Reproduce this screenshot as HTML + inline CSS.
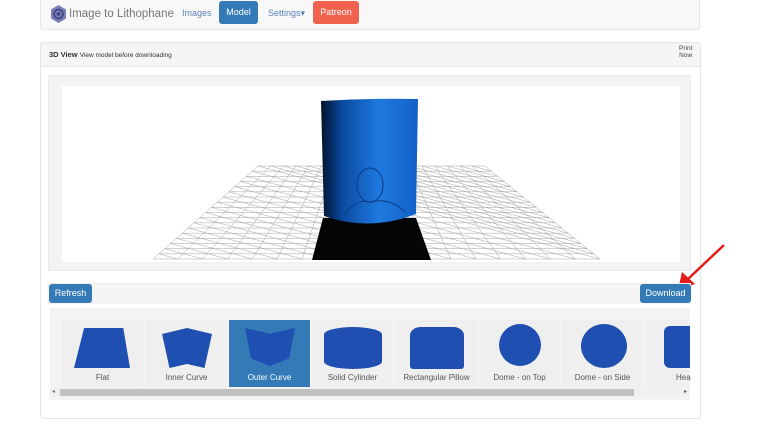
<!DOCTYPE html>
<html><head><meta charset="utf-8"><style>
*{box-sizing:border-box;margin:0;padding:0}
body{width:768px;height:430px;background:#fff;font-family:"Liberation Sans",sans-serif;position:relative;overflow:hidden}
.abs{position:absolute}
.nav{left:40px;top:-1px;width:660px;height:31px;background:#f8f8f8;border:1px solid #e7e7e7;border-radius:0 0 3px 3px}
.btn{position:absolute;color:#fff;font-size:9px;text-align:center;border-radius:3px}
.panel{left:40px;top:42px;width:661px;height:377px;border:1px solid #e6e6e6;border-radius:3px;background:#fff}
.head{left:40px;top:42px;width:661px;height:25px;background:#f5f5f5;border:1px solid #e6e6e6;border-radius:3px 3px 0 0}
.item{position:absolute;top:320px;width:81px;height:67px;background:#efefef;font-size:8px;color:#555;text-align:center}
.item span{position:absolute;left:0;right:0;top:53px}
.shape{position:absolute;background:#1f4fb0}
</style></head><body>
<div class="abs nav"></div>
<svg class="abs" style="left:50px;top:5px" width="17" height="18" viewBox="0 0 17 18"><polygon points="8.5,0 16,4.5 16,13.5 8.5,18 1,13.5 1,4.5" fill="#7a7fb5"/><circle cx="8.5" cy="9" r="4.5" fill="none" stroke="#3d4380" stroke-width="1.6"/><circle cx="8.5" cy="9" r="1.8" fill="#3d4380"/></svg>
<div class="abs" style="left:69px;top:8px;font-size:11.5px;color:#777">Image to Lithophane</div>
<div class="abs" style="left:182px;top:8px;font-size:9px;color:#5b82b8">Images</div>
<div class="btn" style="left:219px;top:1px;width:39px;height:23px;background:#337ab7;line-height:23px">Model</div>
<div class="abs" style="left:268px;top:8px;font-size:9px;color:#5b82b8">Settings▾</div>
<div class="btn" style="left:313px;top:1px;width:46px;height:23px;background:#f0614e;line-height:23px">Patreon</div>

<div class="abs panel"></div>
<div class="abs head"></div>
<div class="abs" style="left:49px;top:50px;font-size:7.5px;color:#333"><b>3D View</b> <span style="font-size:6.5px">View model before downloading</span></div>
<div class="abs" style="left:679px;top:45px;font-size:6.5px;color:#444;line-height:7px;text-align:center">Print<br>Now</div>

<div class="abs" style="left:48px;top:75px;width:643px;height:196px;background:#f3f3f3;border:1px solid #eaeaea"></div>
<div class="abs" style="left:62px;top:86px;width:618px;height:176px;background:#fff"></div>
<svg class="abs" style="left:0;top:0" width="768" height="430" id="g">
<defs><linearGradient id="cy" x1="0" x2="1"><stop offset="0" stop-color="#02122e"/><stop offset=".22" stop-color="#0a4aa0"/><stop offset=".6" stop-color="#1f7ae0"/><stop offset="1" stop-color="#1260c8"/></linearGradient></defs>
<g id="grid" stroke="#9a9a9a" stroke-width=".45" fill="none"></g>
<polygon points="323,218 416,218 431,260 312,260" fill="#050505"/>
<path d="M321,101 Q370,98 418,99 L416,214 Q370,232 324,216 Z" fill="url(#cy)"/>
<ellipse cx="370" cy="185" rx="13" ry="17" fill="none" stroke="#0b3b84" stroke-width="1"/>
<path d="M345,215 Q355,198 370,202 Q390,197 405,212" fill="none" stroke="#0b3b84" stroke-width="1"/>
<path d="M724,245 L688,279" stroke="#e51c1c" stroke-width="2.5"/><polygon points="678,290 682,272 695,284" fill="#e51c1c"/>
</svg>
<script>
(function(){var g=document.getElementById('grid'),TL=[258,166],TR=[485,166],BR=[600,259],BL=[153,259],N=18,s='';
function p(u,v){var a=[TL[0]+(TR[0]-TL[0])*u,TL[1]],b=[BL[0]+(BR[0]-BL[0])*u,BL[1]];return [a[0]+(b[0]-a[0])*v,a[1]+(b[1]-a[1])*v];}
for(var i=0;i<=N;i++){var t=i/N,a=p(t,0),b=p(t,1),c=p(0,t),d=p(1,t);s+='M'+a+'L'+b+'M'+c+'L'+d;}
for(var k=-N;k<=N;k++){var pts=[];for(var i=0;i<=N;i++){var j=i+k;if(j>=0&&j<=N)pts.push(p(j/N,i/N));}if(pts.length>1)s+='M'+pts[0]+'L'+pts[pts.length-1];}
var e=document.createElementNS('http://www.w3.org/2000/svg','path');e.setAttribute('d',s);g.appendChild(e);})();
</script>

<div class="abs" style="left:48px;top:283px;width:643px;height:21px;background:#f5f5f5;border-top:1px solid #eee"></div>
<div class="btn" style="left:49px;top:284px;width:43px;height:19px;background:#337ab7;line-height:19px">Refresh</div>
<div class="btn" style="left:640px;top:284px;width:51px;height:19px;background:#337ab7;line-height:19px">Download</div>

<div class="abs" style="left:50px;top:308px;width:640px;height:92px;background:#f3f3f3"></div>
<div class="item" style="left:62px"><div class="shape" style="left:12px;top:8px;width:56px;height:40px;clip-path:polygon(18% 0,88% 0,100% 100%,0 100%)"></div><span>Flat</span></div>
<div class="item" style="left:146px"><div class="shape" style="left:16px;top:8px;width:50px;height:40px;clip-path:polygon(0 15%,50% 0,100% 15%,85% 100%,50% 90%,15% 100%)"></div><span>Inner Curve</span></div>
<div class="item" style="left:229px;background:#337ab7;color:#fff"><div class="shape" style="left:16px;top:8px;width:50px;height:38px;clip-path:polygon(0 0,50% 15%,100% 0,88% 80%,50% 100%,12% 80%)"></div><span>Outer Curve</span></div>
<div class="item" style="left:312px"><div class="shape" style="left:12px;top:7px;width:58px;height:42px;border-radius:50%/18%"></div><span>Solid Cylinder</span></div>
<div class="item" style="left:396px"><div class="shape" style="left:14px;top:7px;width:54px;height:42px;border-radius:20% 20% 3px 3px"></div><span>Rectangular Pillow</span></div>
<div class="item" style="left:479px"><div class="shape" style="left:20px;top:4px;width:42px;height:42px;border-radius:50%"></div><span>Dome - on Top</span></div>
<div class="item" style="left:562px"><div class="shape" style="left:19px;top:4px;width:46px;height:44px;border-radius:50%"></div><span>Dome - on Side</span></div>
<div class="item" style="left:646px;width:44px"><div class="shape" style="left:18px;top:6px;width:26px;height:42px;border-radius:6px 0 0 6px"></div><span style="left:30px;right:auto">Hea</span></div>
<div class="abs" style="left:50px;top:388px;width:640px;height:9px;background:#f0f0f0"></div>
<div class="abs" style="left:60px;top:389px;width:574px;height:7px;background:#c1c1c1"></div>
<div class="abs" style="left:52px;top:388px;font-size:6px;color:#777">◂</div>
<div class="abs" style="left:684px;top:388px;font-size:6px;color:#555">▸</div>
</body></html>
